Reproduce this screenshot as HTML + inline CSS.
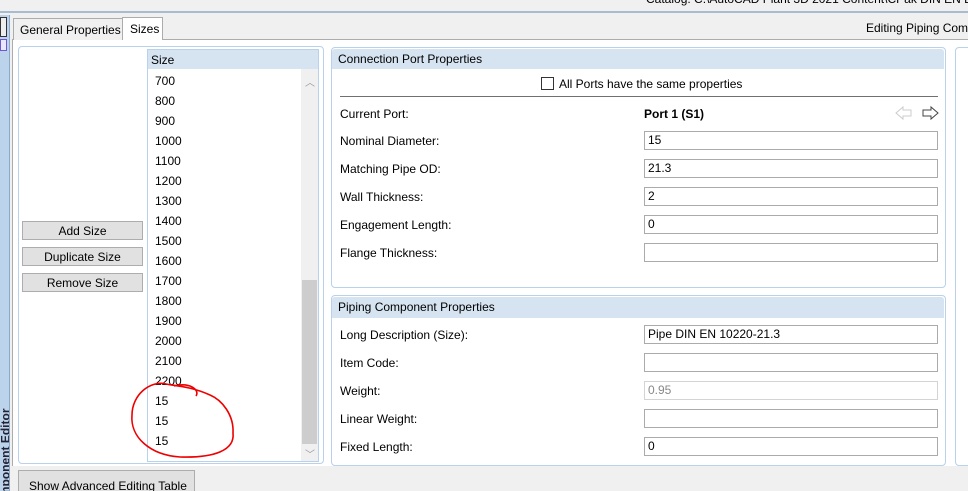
<!DOCTYPE html>
<html><head><style>
*{margin:0;padding:0;box-sizing:border-box}
html,body{width:968px;height:491px;overflow:hidden}
body{background:#f0f0f0;font-family:"Liberation Sans",sans-serif;font-size:12px;color:#000;position:relative}
.a{position:absolute;white-space:nowrap}
.grp{position:absolute;border:1px solid #b9d1ea;border-radius:4px;background:#fff}
.hdr{position:absolute;background:#d6e3f1;padding-left:6px;line-height:21px;border-radius:3px 3px 0 0}
.btn{position:absolute;left:22px;width:121px;height:19px;background:#e1e1e1;border:1px solid #adadad;text-align:center;line-height:18px}
.lbl{position:absolute;left:340px}
.inp{position:absolute;left:644px;width:294px;height:19px;border:1px solid #ababab;background:#fff;padding-left:3px;line-height:17px}
.it{position:absolute;left:155px}
</style></head><body>
<div class="a" style="left:0;top:0;width:968px;height:13px;background:#f0f0f0;border-bottom:2px solid #a9bbd0"></div>
<div class="a" style="left:646px;top:-8px;width:322px;overflow:hidden">Catalog: C:\AutoCAD Plant 3D 2021 Content\CPak DIN EN En</div>
<div class="a" style="left:0;top:15px;width:10px;height:476px;background:#bcd3ec;border-right:1px solid #8ea9c8;overflow:hidden">
<div style="position:absolute;left:-52px;top:425px;width:115px;transform:rotate(-90deg);font-size:12px;font-weight:bold;color:#223;white-space:nowrap">omponent Editor</div></div>
<div class="a" style="left:0;top:17px;width:7px;height:20px;border:1px solid #333;background:#eee"></div>
<div class="a" style="left:0;top:39px;width:7px;height:12px;border:1px solid #6a5acd;background:#eae6ff"></div>
<div class="a" style="left:866px;top:21px;width:102px;overflow:hidden">Editing Piping Com</div>
<div class="a" style="left:12px;top:39px;width:956px;height:1px;background:#acacac"></div>
<div class="a" style="left:13px;top:18px;width:110px;height:22px;background:#f0f0f0;border:1px solid #acacac;border-bottom:none;padding:4px 0 0 6px">General Properties</div>
<div class="a" style="left:122px;top:17px;width:41px;height:24px;background:#fff;border:1px solid #acacac;border-bottom:none;padding:4px 0 0 7px">Sizes</div>
<div class="a" style="left:12px;top:40px;width:956px;height:426px;background:#fff;border-left:1px solid #acacac"></div>
<div class="grp" style="left:18px;top:46px;width:306px;height:418px"></div>
<div class="a" style="left:147px;top:49px;width:172px;height:413px;border:1px solid #b9d1ea;background:#fff"></div>
<div class="hdr" style="left:148px;top:50px;width:170px;height:19px;line-height:20px;padding-left:3px;border-radius:0">Size</div>
<div class="a" style="left:301px;top:69px;width:17px;height:392px;background:#f0f0f0"></div>
<div class="a" style="left:302px;top:280px;width:15px;height:164px;background:#cdcdcd"></div>
<div class="a" style="left:305px;top:74px;color:#999;font-size:10px">︿</div>
<div class="a" style="left:305px;top:446px;color:#999;font-size:10px">﹀</div>
<div class="it" style="top:74px">700</div><div class="it" style="top:94px">800</div><div class="it" style="top:114px">900</div><div class="it" style="top:134px">1000</div><div class="it" style="top:154px">1100</div><div class="it" style="top:174px">1200</div><div class="it" style="top:194px">1300</div><div class="it" style="top:214px">1400</div><div class="it" style="top:234px">1500</div><div class="it" style="top:254px">1600</div><div class="it" style="top:274px">1700</div><div class="it" style="top:294px">1800</div><div class="it" style="top:314px">1900</div><div class="it" style="top:334px">2000</div><div class="it" style="top:354px">2100</div><div class="it" style="top:374px">2200</div><div class="it" style="top:394px">15</div><div class="it" style="top:414px">15</div><div class="it" style="top:434px">15</div>
<div class="btn" style="top:221px">Add Size</div>
<div class="btn" style="top:247px">Duplicate Size</div>
<div class="btn" style="top:273px">Remove Size</div>
<div class="grp" style="left:331px;top:47px;width:615px;height:241px"></div>
<div class="hdr" style="left:332px;top:49px;width:612px;height:20px">Connection Port Properties</div>
<div class="a" style="left:541px;top:77px;width:13px;height:13px;border:1px solid #333;background:#fff"></div>
<div class="a" style="left:559px;top:77px">All Ports have the same properties</div>
<div class="a" style="left:340px;top:96px;width:598px;height:1px;background:#707070"></div>
<div class="lbl" style="top:107px">Current Port:</div>
<div class="a" style="left:644px;top:107px;font-weight:bold">Port 1 (S1)</div>
<svg class="a" style="left:894px;top:104px" width="46" height="18"><path d="M2 9 L9 3 V6 H17 V12 H9 V15 Z" fill="#fff" stroke="#ccc"/><path d="M44 9 L37 3 V6 H29 V12 H37 V15 Z" fill="#fff" stroke="#444"/></svg>
<div class="lbl" style="top:134px">Nominal Diameter:</div><div class="inp" style="top:131px">15</div>
<div class="lbl" style="top:162px">Matching Pipe OD:</div><div class="inp" style="top:159px">21.3</div>
<div class="lbl" style="top:190px">Wall Thickness:</div><div class="inp" style="top:187px">2</div>
<div class="lbl" style="top:218px">Engagement Length:</div><div class="inp" style="top:215px">0</div>
<div class="lbl" style="top:246px">Flange Thickness:</div><div class="inp" style="top:243px"></div>
<div class="grp" style="left:331px;top:295px;width:615px;height:171px"></div>
<div class="hdr" style="left:332px;top:297px;width:612px;height:21px">Piping Component Properties</div>
<div class="lbl" style="top:328px">Long Description (Size):</div><div class="inp" style="top:325px">Pipe DIN EN 10220-21.3</div>
<div class="lbl" style="top:356px">Item Code:</div><div class="inp" style="top:353px"></div>
<div class="lbl" style="top:384px">Weight:</div><div class="inp" style="top:381px;border-color:#d4d4d4;color:#888">0.95</div>
<div class="lbl" style="top:412px">Linear Weight:</div><div class="inp" style="top:409px"></div>
<div class="lbl" style="top:440px">Fixed Length:</div><div class="inp" style="top:437px">0</div>
<div class="grp" style="left:955px;top:47px;width:30px;height:419px"></div>
<div class="a" style="left:18px;top:470px;width:177px;height:24px;background:#e1e1e1;border:1px solid #adadad;padding:8px 0 0 10px">Show Advanced Editing Table</div>
<svg class="a" style="left:0;top:0" width="968" height="491"><path d="M174 386 C190 382 200 390 196 396 M166 384 C150 380 132 395 132 415 C130 437 150 455 180 457 C215 458 235 450 233 433 C234 415 222 400 210 395 C190 386 175 386 166 384" fill="none" stroke="#e00" stroke-width="1.6"/></svg>
</body></html>
